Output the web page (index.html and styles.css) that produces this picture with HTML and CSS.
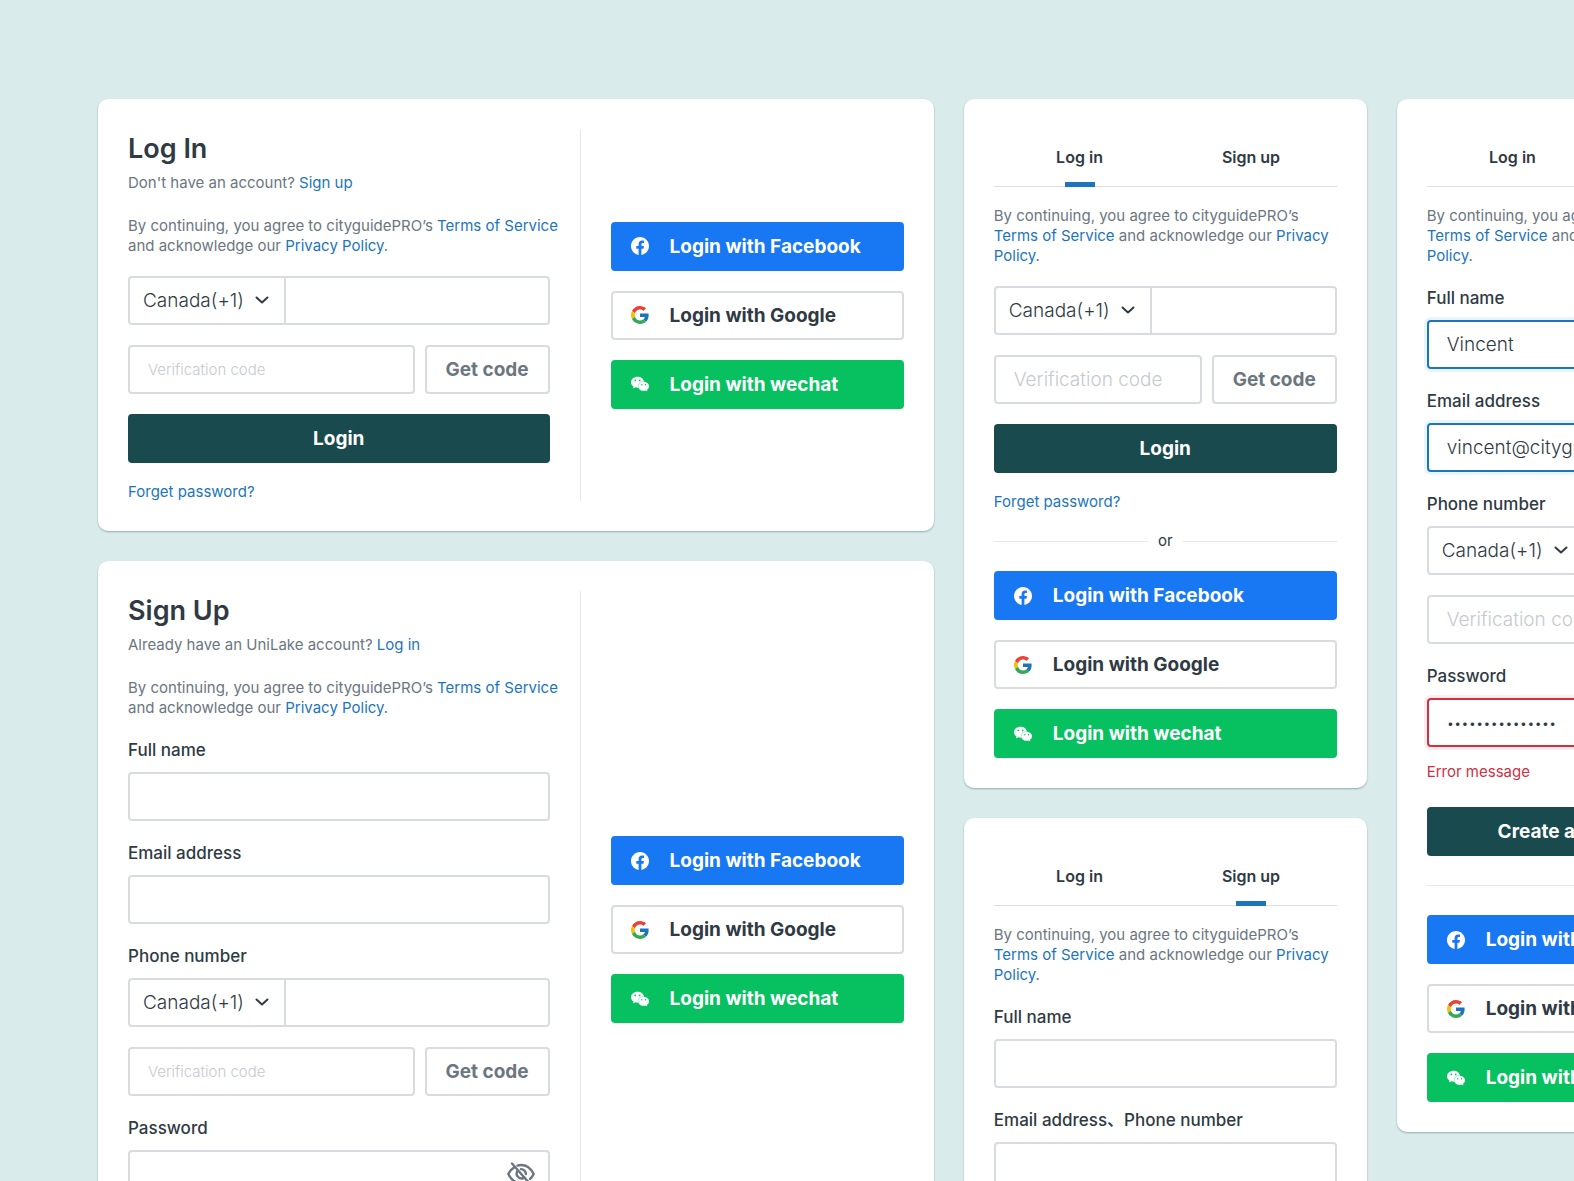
FILE: index.html
```html
<!DOCTYPE html>
<html lang="en">

<head>
    <meta charset="UTF-8">
    <meta name="viewport" content="width=device-width, initial-scale=1.0">
    <title>cityguidePRO - Log in / Sign up</title>
    <link rel="stylesheet" href="styles.css">
</head>

<body>

    <!-- icons -->
    <svg class="sprite" aria-hidden="true">
        <symbol id="icon-facebook" viewBox="0 0 24 24">
            <path fill="#fff" d="M24 12.073c0-6.627-5.373-12-12-12s-12 5.373-12 12c0 5.99 4.388 10.954 10.125 11.854v-8.385H7.078v-3.47h3.047V9.43c0-3.007 1.792-4.669 4.533-4.669 1.312 0 2.686.235 2.686.235v2.953H15.83c-1.491 0-1.956.925-1.956 1.874v2.25h3.328l-.532 3.47h-2.796v8.385C19.612 23.027 24 18.062 24 12.073z" />
        </symbol>
        <symbol id="icon-google" viewBox="0 0 48 48">
            <path fill="#ea4335" d="M24 9.5c3.54 0 6.71 1.22 9.21 3.6l6.85-6.85C35.9 2.38 30.47 0 24 0 14.62 0 6.51 5.38 2.56 13.22l7.98 6.19C12.43 13.72 17.74 9.5 24 9.5z" />
            <path fill="#1c75bc" d="M46.98 24.55c0-1.57-.15-3.09-.38-4.55H24v9.02h12.94c-.58 2.96-2.26 5.48-4.78 7.18l7.73 6c4.51-4.18 7.09-10.36 7.09-17.65z" />
            <path fill="#fbbc05" d="M10.53 28.59c-.48-1.45-.76-2.99-.76-4.59s.27-3.14.76-4.59l-7.98-6.19C.92 16.46 0 20.12 0 24c0 3.88.92 7.54 2.56 10.78l7.97-6.19z" />
            <path fill="#34a853" d="M24 48c6.48 0 11.93-2.13 15.89-5.81l-7.73-6c-2.15 1.45-4.92 2.3-8.16 2.3-6.26 0-11.57-4.22-13.47-9.91l-7.98 6.19C6.51 42.62 14.62 48 24 48z" />
        </symbol>
        <symbol id="icon-wechat" viewBox="0 0 24 24">
            <path fill="#fff" d="M8.691 2.188C3.891 2.188 0 5.476 0 9.53c0 2.212 1.17 4.203 3.002 5.55a.59.59 0 0 1 .213.665l-.39 1.48c-.019.07-.048.141-.048.213 0 .163.13.295.29.295a.326.326 0 0 0 .167-.054l1.903-1.114a.864.864 0 0 1 .717-.098 10.16 10.16 0 0 0 2.837.403c.276 0 .543-.027.811-.05-.857-2.578.157-4.972 1.932-6.446 1.703-1.415 3.882-1.98 5.853-1.838-.576-3.583-4.196-6.348-8.596-6.348zM5.785 5.991c.642 0 1.162.529 1.162 1.18a1.17 1.17 0 0 1-1.162 1.178A1.17 1.17 0 0 1 4.623 7.17c0-.651.52-1.18 1.162-1.18zm5.813 0c.642 0 1.162.529 1.162 1.18a1.17 1.17 0 0 1-1.162 1.178 1.17 1.17 0 0 1-1.162-1.178c0-.651.52-1.18 1.162-1.18zm5.34 2.867c-1.797-.052-3.746.512-5.28 1.786-1.72 1.428-2.687 3.72-1.78 6.22.942 2.453 3.666 4.229 6.884 4.229.826 0 1.622-.12 2.361-.336a.722.722 0 0 1 .598.082l1.584.926a.272.272 0 0 0 .14.047c.134 0 .24-.111.24-.247 0-.06-.023-.12-.038-.177l-.327-1.233a.582.582 0 0 1-.023-.156.49.49 0 0 1 .201-.398C23.024 18.48 24 16.82 24 14.98c0-3.21-2.931-5.837-6.656-6.088V8.89c-.135-.01-.27-.027-.407-.03zm-2.53 3.274c.535 0 .969.44.969.982a.976.976 0 0 1-.969.983.976.976 0 0 1-.969-.983c0-.542.434-.982.97-.982zm4.844 0c.535 0 .969.44.969.982a.976.976 0 0 1-.969.983.976.976 0 0 1-.969-.983c0-.542.434-.982.969-.982z" />
        </symbol>
        <symbol id="icon-chevron" viewBox="0 0 14 8">
            <path fill="none" stroke="#2f3a44" stroke-width="2" stroke-linecap="round" stroke-linejoin="round" d="M1.5 1.5 7 6.5l5.5-5" />
        </symbol>
        <symbol id="icon-eye-off" viewBox="0 0 28 24">
            <g fill="none" stroke="#6b7680" stroke-width="2.4" stroke-linecap="round">
                <path d="M10.5 3.6C11.6 3.2 12.8 3 14 3c5.5 0 10 3.5 12.7 9-1 2-2.2 3.7-3.7 5" />
                <path d="M7 5.5C4.6 7 2.7 9.3 1.3 12 4 17.5 8.5 21 14 21c2 0 3.9-.5 5.6-1.4" />
                <path d="M10.5 8.8a4.9 4.9 0 0 0 6.9 6.7" />
                <path d="M14 7.1a4.9 4.9 0 0 1 4.9 4.9" />
                <path d="M5 1.5 23.5 22.5" />
            </g>
        </symbol>
    </svg>

    <main class="board">

        <div class="column">
            <!-- desktop log in -->
            <section class="card split">
                <form class="main">
                    <h1>Log In</h1>
                    <p class="sub">Don't have an account? <a href="#">Sign up</a></p>
                    <p class="terms">By continuing, you agree to cityguidePRO’s <a href="#">Terms of Service</a> <br>and acknowledge our <a href="#">Privacy Policy</a>.</p>
                    <div class="phone">
                        <select aria-label="Country code">
                            <option>Canada(+1)</option>
                        </select>
                        <svg class="chevron"><use href="#icon-chevron" /></svg>
                        <input type="tel" aria-label="Phone number">
                    </div>
                    <div class="code">
                        <input class="field small" type="text" placeholder="Verification code" aria-label="Verification code">
                        <button type="button" class="get-code">Get code</button>
                    </div>
                    <button type="submit" class="submit">Login</button>
                    <a class="forget" href="#">Forget password?</a>
                </form>
                <div class="social">
                    <button type="button" class="facebook"><svg><use href="#icon-facebook" /></svg>Login with Facebook</button>
                    <button type="button" class="google"><svg><use href="#icon-google" /></svg>Login with Google</button>
                    <button type="button" class="wechat"><svg><use href="#icon-wechat" /></svg>Login with wechat</button>
                </div>
            </section>

            <!-- desktop sign up -->
            <section class="card split">
                <form class="main">
                    <h1>Sign Up</h1>
                    <p class="sub">Already have an UniLake account? <a href="#">Log in</a></p>
                    <p class="terms">By continuing, you agree to cityguidePRO’s <a href="#">Terms of Service</a> <br>and acknowledge our <a href="#">Privacy Policy</a>.</p>
                    <label for="name1">Full name</label>
                    <input class="field" type="text" id="name1">
                    <label for="email1">Email address</label>
                    <input class="field" type="email" id="email1">
                    <label for="phone1">Phone number</label>
                    <div class="phone">
                        <select aria-label="Country code">
                            <option>Canada(+1)</option>
                        </select>
                        <svg class="chevron"><use href="#icon-chevron" /></svg>
                        <input type="tel" id="phone1">
                    </div>
                    <div class="code">
                        <input class="field small" type="text" placeholder="Verification code" aria-label="Verification code">
                        <button type="button" class="get-code">Get code</button>
                    </div>
                    <label for="password1">Password</label>
                    <div class="password">
                        <input class="field" type="password" id="password1">
                        <button type="button" class="eye" aria-label="Show password"><svg><use href="#icon-eye-off" /></svg></button>
                    </div>
                    <button type="submit" class="submit">Create a new account</button>
                </form>
                <div class="social">
                    <button type="button" class="facebook"><svg><use href="#icon-facebook" /></svg>Login with Facebook</button>
                    <button type="button" class="google"><svg><use href="#icon-google" /></svg>Login with Google</button>
                    <button type="button" class="wechat"><svg><use href="#icon-wechat" /></svg>Login with wechat</button>
                </div>
            </section>
        </div>

        <div class="column">
            <!-- mobile log in -->
            <section class="card">
                <nav class="tabs">
                    <a class="active" href="#">Log in</a>
                    <a href="#">Sign up</a>
                </nav>
                <form class="main">
                    <p class="terms">By continuing, you agree to cityguidePRO’s <a href="#">Terms of Service</a> and acknowledge our <a href="#">Privacy Policy</a>.</p>
                    <div class="phone">
                        <select aria-label="Country code">
                            <option>Canada(+1)</option>
                        </select>
                        <svg class="chevron"><use href="#icon-chevron" /></svg>
                        <input type="tel" aria-label="Phone number">
                    </div>
                    <div class="code">
                        <input class="field" type="text" placeholder="Verification code" aria-label="Verification code">
                        <button type="button" class="get-code">Get code</button>
                    </div>
                    <button type="submit" class="submit">Login</button>
                    <a class="forget" href="#">Forget password?</a>
                </form>
                <div class="or">or</div>
                <div class="social">
                    <button type="button" class="facebook"><svg><use href="#icon-facebook" /></svg>Login with Facebook</button>
                    <button type="button" class="google"><svg><use href="#icon-google" /></svg>Login with Google</button>
                    <button type="button" class="wechat"><svg><use href="#icon-wechat" /></svg>Login with wechat</button>
                </div>
            </section>

            <!-- mobile sign up -->
            <section class="card">
                <nav class="tabs">
                    <a href="#">Log in</a>
                    <a class="active" href="#">Sign up</a>
                </nav>
                <form class="main">
                    <p class="terms">By continuing, you agree to cityguidePRO’s <a href="#">Terms of Service</a> and acknowledge our <a href="#">Privacy Policy</a>.</p>
                    <label for="name2">Full name</label>
                    <input class="field" type="text" id="name2">
                    <label for="email2">Email address、Phone number</label>
                    <input class="field" type="text" id="email2">
                    <button type="submit" class="submit">Create a new account</button>
                </form>
            </section>
        </div>

        <div class="column">
            <!-- mobile sign up, filled in -->
            <section class="card">
                <nav class="tabs">
                    <a href="#">Log in</a>
                    <a class="active" href="#">Sign up</a>
                </nav>
                <form class="main">
                    <p class="terms">By continuing, you agree to cityguidePRO’s <a href="#">Terms of Service</a> and acknowledge our <a href="#">Privacy Policy</a>.</p>
                    <label for="name3">Full name</label>
                    <input class="field focus" type="text" id="name3" value="Vincent">
                    <label for="email3">Email address</label>
                    <input class="field focus" type="email" id="email3" value="vincent@cityguide.pro">
                    <label for="phone3">Phone number</label>
                    <div class="phone">
                        <select aria-label="Country code">
                            <option>Canada(+1)</option>
                        </select>
                        <svg class="chevron"><use href="#icon-chevron" /></svg>
                        <input type="tel" id="phone3">
                    </div>
                    <div class="code">
                        <input class="field" type="text" placeholder="Verification code" aria-label="Verification code">
                        <button type="button" class="get-code">Get code</button>
                    </div>
                    <label for="password3">Password</label>
                    <input class="field error" type="password" id="password3" value="cityguidepro123">
                    <p class="error-message">Error message</p>
                    <button type="submit" class="submit">Create a new account</button>
                </form>
                <hr>
                <div class="social">
                    <button type="button" class="facebook"><svg><use href="#icon-facebook" /></svg>Login with Facebook</button>
                    <button type="button" class="google"><svg><use href="#icon-google" /></svg>Login with Google</button>
                    <button type="button" class="wechat"><svg><use href="#icon-wechat" /></svg>Login with wechat</button>
                </div>
            </section>
        </div>

    </main>

</body>

</html>
```
FILE: styles.css
```css
* {
    box-sizing: border-box;
}

body {
    background: #daebeb;
    color: #2f3a44;
    font-family: Inter, "Noto Sans CJK SC", sans-serif;
    margin: 0;
    overflow-x: hidden;
}

a {
    color: #1c75bc;
    text-decoration: none;
}

button,
input,
select {
    font-family: inherit;
    color: inherit;
}

button {
    cursor: pointer;
}

.sprite {
    display: none;
}

/* three columns, the last one runs off the right edge */
.board {
    display: grid;
    grid-template-columns: 53.1vw 25.6vw 25.6vw;
    gap: 30px;
    align-items: start;
    padding: 99px 98px;
}

.column {
    display: flex;
    flex-direction: column;
    gap: 30px;
}

.card {
    background: white;
    padding: 30px;
    border-radius: 10px;
    box-shadow: 0 1px 2px rgba(16, 60, 70, 0.35);
}

.split {
    display: grid;
    grid-template-columns: minmax(0, 7fr) minmax(0, 5fr);
}

.split .main {
    padding-right: 30px;
    border-right: 1px solid #e6e8eb;
}

.split .terms {
    white-space: nowrap;
}

.split .social {
    align-self: center;
    padding-left: 30px;
}

.main {
    display: flex;
    flex-direction: column;
}

h1 {
    margin: 0;
    font-size: 27px;
    line-height: 40px;
    font-weight: 600;
}

.sub {
    margin: 0 0 20px;
    font-size: 15px;
    line-height: 27px;
    color: #6b7680;
}

.terms {
    margin: 0 0 20px;
    font-size: 15px;
    line-height: 20px;
    color: #6b7680;
}

label {
    margin-bottom: 10px;
    font-size: 17px;
    line-height: 24px;
    font-weight: 500;
}

/* fields */
.field,
.phone {
    width: 100%;
    height: 49px;
    margin-bottom: 20px;
    background: white;
    border: 2px solid #d8dce0;
    border-radius: 4px;
}

.field {
    min-width: 0;
    padding: 0 18px;
    font-size: 19px;
    font-weight: 300;
    outline: none;
}

.field::placeholder {
    color: #c5cacf;
}

.field.small {
    font-size: 15px;
}

.field.focus {
    border-color: #1c75bc;
    box-shadow: 0 0 0 3px #e9f5fe;
}

.field.error {
    margin-bottom: 10px;
    border-color: #d0303f;
    box-shadow: 0 0 0 3px #fdebed;
    font-size: 13px;
}

.error-message {
    margin: 0 0 20px;
    font-size: 15px;
    line-height: 30px;
    color: #d0303f;
}

.phone {
    position: relative;
    display: flex;
}

.phone select {
    appearance: none;
    width: 156px;
    padding: 0 13px;
    background: none;
    border: none;
    border-right: 2px solid #d8dce0;
    font-size: 19px;
    font-weight: 300;
    outline: none;
}

.phone input {
    flex: 1;
    min-width: 0;
    padding: 0 18px;
    border: none;
    background: none;
    font-size: 19px;
    font-weight: 300;
    outline: none;
}

.chevron {
    position: absolute;
    left: 125px;
    top: 18px;
    width: 14px;
    height: 8px;
    pointer-events: none;
}

.code {
    display: flex;
    gap: 10px;
}

.get-code {
    flex: 0 0 125px;
    height: 49px;
    padding: 0;
    background: white;
    border: 2px solid #d8dce0;
    border-radius: 4px;
    font-size: 19px;
    font-weight: 700;
    color: #6b7680;
}

.password {
    position: relative;
}

.eye {
    position: absolute;
    top: 12px;
    right: 15px;
    padding: 0;
    border: none;
    background: none;
}

.eye svg {
    display: block;
    width: 28px;
    height: 24px;
}

.submit {
    height: 49px;
    background: #194a4d;
    border: none;
    border-radius: 4px;
    font-size: 19px;
    font-weight: 700;
    color: white;
}

.forget {
    margin-top: 19px;
    font-size: 15px;
    line-height: 19px;
}

/* social buttons */
.social {
    display: flex;
    flex-direction: column;
    gap: 20px;
}

.social button {
    display: flex;
    align-items: center;
    gap: 21px;
    height: 49px;
    padding: 0 18px;
    border: 2px solid transparent;
    border-radius: 4px;
    font-size: 19px;
    font-weight: 700;
    white-space: nowrap;
    color: white;
}

.social svg {
    flex: none;
    width: 18px;
    height: 18px;
}

.social .facebook {
    background: #1877f2;
    border-color: #1877f2;
}

.social .google {
    background: white;
    border-color: #d8dce0;
    color: #2f3a44;
}

.social .wechat {
    background: #07c160;
    border-color: #07c160;
}

/* tabs */
.tabs {
    display: flex;
    margin-bottom: 19px;
    border-bottom: 1px solid #dcdfe2;
}

.tabs a {
    position: relative;
    flex: 1;
    font-size: 16px;
    line-height: 57px;
    font-weight: 600;
    text-align: center;
    color: #2f3a44;
}

.tabs .active::after {
    content: "";
    position: absolute;
    left: 50%;
    bottom: -1px;
    width: 30px;
    height: 5px;
    margin-left: -15px;
    background: #1c75bc;
}

.or {
    display: flex;
    align-items: center;
    gap: 10px;
    margin: 20px 0;
    font-size: 15px;
    line-height: 20px;
}

.or::before,
.or::after {
    content: "";
    flex: 1;
    height: 1px;
    background: #e6e8eb;
}

hr {
    height: 1px;
    margin: 29px 0;
    border: none;
    background: #e6e8eb;
}
```
